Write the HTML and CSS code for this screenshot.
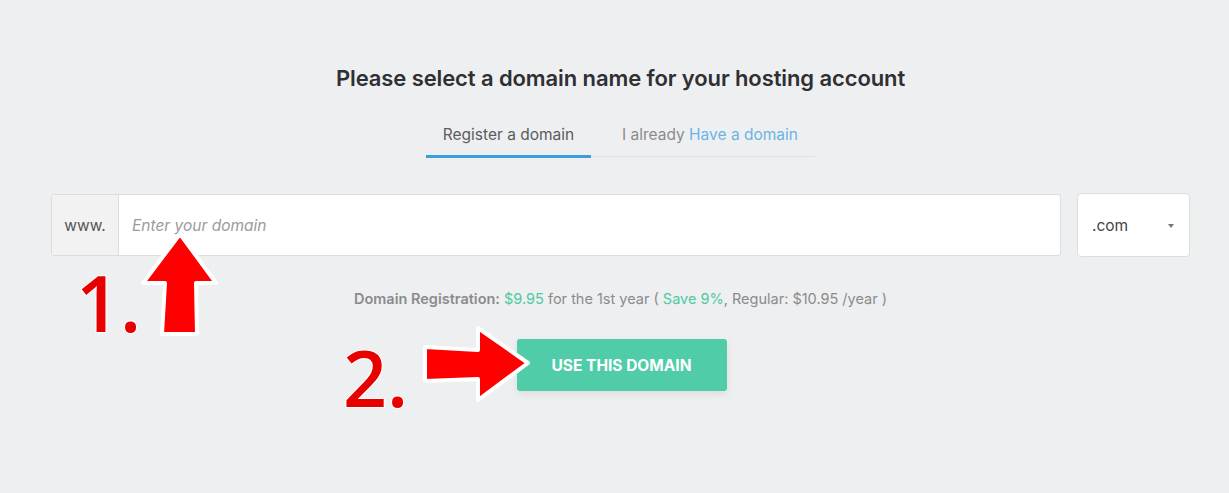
FILE: index.html
```html
<!DOCTYPE html>
<html>
<head>
<meta charset="utf-8">
<link rel="stylesheet" href="styles.css">
</head>
<body>
<div class="page">
  <h1 class="title">Please select a domain name for your hosting account</h1>
  <div class="tabs">
    <div class="tab tab-active">Register a domain</div>
    <div class="tab">I already <span class="link">Have a domain</span></div>
  </div>
  <div class="domain-row">
    <div class="input-group">
      <span class="addon">www.</span>
      <input class="domain-input" type="text" placeholder="Enter your domain">
    </div>
    <div class="tld-select">
      <span>.com</span>
      <span class="caret"></span>
    </div>
  </div>
  <p class="price"><b>Domain Registration:</b> <span class="green">$9.95</span> for the 1st year ( <span class="green">Save 9%</span>, Regular: $10.95 /year )</p>
  <div class="actions">
    <button class="btn">USE THIS DOMAIN</button>
  </div>
</div>
<svg class="annotations" width="1229" height="493" viewBox="0 0 1229 493">
  <polygon class="arrow" points="180,234 216,283 196,283 197,334 162,334 165,283 143,283"/>
  <polygon class="arrow" points="425,347 478,350 478,328 528,363 478,400 478,379 425,381"/>
  <text class="num" x="76" y="332">1.</text>
  <text class="num" x="343" y="407">2.</text>
</svg>
</body>
</html>
```
FILE: styles.css
```css
html, body {
  margin: 0;
  padding: 0;
}
body {
  background: #eeeff1;
  font-family: Inter, "Noto Sans", sans-serif;
  color: #333;
  width: 1229px;
  height: 493px;
  overflow: hidden;
  position: relative;
}
.page {
  padding: 64px 39px 0 51px;
}
.title {
  margin: 0;
  text-align: center;
  font-size: 22px;
  font-weight: 600;
  line-height: 28px;
  letter-spacing: -0.1px;
  color: #2f3033;
}
.tabs {
  display: flex;
  width: 389px;
  margin: 21px auto 0;
  border-bottom: 1px solid #dfe0e2;
}
.tab {
  font-size: 15.5px;
  color: #8a8b8d;
  padding: 12px 0 10px;
  line-height: 20px;
}
.tab-active {
  width: 165px;
  text-align: center;
  color: #5b5c5e;
  border-bottom: 3px solid #3d9be0;
  margin-bottom: -2px;
}
.tab + .tab {
  padding-left: 31px;
}
.link {
  color: #6db3e6;
}
.domain-row {
  display: flex;
  gap: 16px;
  margin-top: 36px;
  align-items: center;
}
.input-group {
  flex: 1;
  display: flex;
  height: 62px;
  border: 1px solid #dcdddf;
  border-radius: 3px;
  background: #fff;
  box-sizing: border-box;
}
.addon {
  width: 66px;
  display: flex;
  align-items: center;
  justify-content: center;
  background: #f2f2f3;
  border-right: 1px solid #dcdddf;
  font-size: 15.5px;
  color: #555;
  border-radius: 3px 0 0 3px;
}
.domain-input {
  flex: 1;
  border: none;
  outline: none;
  background: transparent;
  padding: 0 13px;
  font-family: inherit;
  font-size: 15.5px;
}
.domain-input::placeholder {
  color: #9a9b9d;
  font-style: italic;
}
.tld-select {
  width: 113px;
  height: 64px;
  box-sizing: border-box;
  background: #fff;
  border: 1px solid #dcdddf;
  border-radius: 4px;
  display: flex;
  align-items: center;
  justify-content: space-between;
  padding: 0 15px 0 14px;
  font-size: 15.5px;
  color: #444;
}
.caret {
  width: 0;
  height: 0;
  border-left: 3px solid transparent;
  border-right: 3px solid transparent;
  border-top: 4px solid #777;
  margin-top: 2px;
}
.price {
  margin: 32px 0 0;
  text-align: center;
  font-size: 14.5px;
  color: #8a8b8d;
  line-height: 20px;
}
.price b {
  font-weight: 600;
  color: #8a8b8d;
}
.green {
  color: #4fc9a0;
}
.actions {
  display: flex;
  justify-content: center;
  margin-top: 30px;
}
.btn {
  width: 210px;
  height: 52px;
  margin-left: 2px;
  background: #50cda8;
  color: #fff;
  border: none;
  border-radius: 3px;
  font-family: inherit;
  font-size: 15.5px;
  font-weight: 700;
  letter-spacing: 0;
  box-shadow: 0 3px 8px rgba(0,0,0,0.08);
}
.annotations {
  position: absolute;
  left: 0;
  top: 0;
  pointer-events: none;
}
.arrow {
  fill: #ff0000;
  stroke: #fff;
  stroke-width: 4;
  stroke-linejoin: round;
}
.num {
  font-family: "Open Sans", sans-serif;
  font-weight: 600;
  font-size: 77px;
  fill: #e60000;
  stroke: #fff;
  stroke-width: 2;
  paint-order: stroke;
}
```
